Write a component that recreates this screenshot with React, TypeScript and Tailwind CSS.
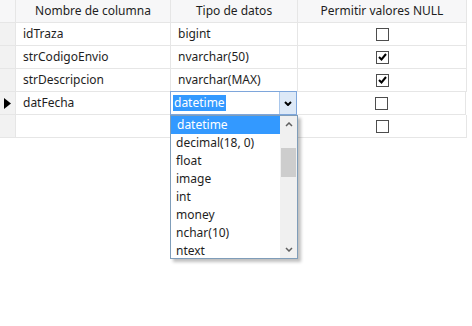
import type { ReactNode } from "react";

type Col = {
  name: string;
  type: string;
  nulls: boolean;
  current?: boolean;
};

const rows: Col[] = [
  { name: "idTraza", type: "bigint", nulls: false },
  { name: "strCodigoEnvio", type: "nvarchar(50)", nulls: true },
  { name: "strDescripcion", type: "nvarchar(MAX)", nulls: true },
  { name: "datFecha", type: "datetime", nulls: false, current: true },
];

const options = ["datetime", "decimal(18, 0)", "float", "image", "int", "money", "nchar(10)", "ntext"];

function Checkbox({ checked }: { checked: boolean }) {
  return (
    <span className="flex h-[13px] w-[13px] items-center justify-center border border-[#4d4d4d] bg-white">
      {checked ? (
        <svg width="9" height="8" viewBox="0 0 9 8">
          <path d="M1 4 L3.5 6.5 L8 1" fill="none" stroke="#000" strokeWidth="2" />
        </svg>
      ) : null}
    </span>
  );
}

function Chevron({ up = false, dark = false }: { up?: boolean; dark?: boolean }) {
  return (
    <svg width="8" height="5" viewBox="0 0 8 5" className={up ? "rotate-180" : ""}>
      <path d="M1 1 L4 4 L7 1" fill="none" stroke={dark ? "#000" : "#606060"} strokeWidth={dark ? 2 : 1.5} />
    </svg>
  );
}

function Row({ head, children }: { head?: ReactNode; children: ReactNode }) {
  return (
    <div className="flex h-[23px]">
      <div className="flex w-[16px] items-center justify-center border-r border-b border-[#e6e6e6] bg-[#f2f2f2]">
        {head}
      </div>
      {children}
    </div>
  );
}

export default function App() {
  return (
    <div
      className="relative h-[326px] w-[472px] overflow-hidden bg-white text-[12px] text-[#1e1e1e]"
      style={{ fontFamily: '"Noto Sans", "Open Sans", sans-serif' }}
    >
      <div className="w-[467px]">
        <div className="flex h-[23px] bg-[#f7f7f8]">
          <div className="w-[16px] border-r border-b border-[#e6e6e6]" />
          <div className="flex w-[155px] items-center justify-center border-r border-b border-[#e6e6e6]">
            Nombre de columna
          </div>
          <div className="flex w-[127px] items-center justify-center border-r border-b border-[#e6e6e6]">
            Tipo de datos
          </div>
          <div className="flex w-[169px] items-center justify-center border-r border-b border-[#e6e6e6]">
            Permitir valores NULL
          </div>
        </div>

        {rows.map((r) => (
          <Row
            key={r.name}
            head={
              r.current ? (
                <svg width="7" height="11" viewBox="0 0 7 11">
                  <path d="M0 0 L7 5.5 L0 11 Z" fill="#000" />
                </svg>
              ) : null
            }
          >
            <div className="flex w-[155px] items-center border-r border-b border-[#e6e6e6] pl-[7px]">
              {r.name}
            </div>
            {r.current ? (
              <div className="flex w-[127px] items-stretch border border-[#7ea6db] bg-white -ml-px -mt-px h-[24px]">
                <div className="flex flex-1 items-center pl-[2px]">
                  <span className="bg-[#3399ff] px-px leading-[16px] text-white">datetime</span>
                </div>
                <div className="flex w-[17px] items-center justify-center border-l border-[#a9c7ec] bg-[#dde9f7]">
                  <Chevron dark />
                </div>
              </div>
            ) : (
              <div className="flex w-[127px] items-center border-r border-b border-[#e6e6e6] pl-[7px]">
                {r.type}
              </div>
            )}
            <div className="flex w-[169px] items-center justify-center border-r border-b border-[#e6e6e6]">
              <Checkbox checked={r.nulls} />
            </div>
          </Row>
        ))}

        <Row>
          <div className="w-[155px] border-r border-b border-[#e6e6e6]" />
          <div className="w-[127px] border-r border-b border-[#e6e6e6]" />
          <div className="flex w-[169px] items-center justify-center border-r border-b border-[#e6e6e6]">
            <Checkbox checked={false} />
          </div>
        </Row>
      </div>

      <div className="absolute left-[170px] top-[115px] flex h-[144px] w-[128px] border border-[#7f9db9] bg-white shadow-[3px_3px_3px_rgba(0,0,0,0.25)]">
        <div className="flex flex-1 flex-col">
          {options.map((o, i) => (
            <div
              key={o}
              className={
                i === 0
                  ? "flex h-[18px] items-center bg-[#3399ff] pl-[6px] text-white"
                  : "flex h-[18px] items-center pl-[5px]"
              }
            >
              {o}
            </div>
          ))}
        </div>
        <div className="flex w-[17px] flex-col bg-[#f0f0f0]">
          <div className="flex h-[17px] items-center justify-center">
            <Chevron up />
          </div>
          <div className="mt-[15px] h-[29px] mx-px bg-[#cdcdcd]" />
          <div className="flex-1" />
          <div className="flex h-[17px] items-center justify-center">
            <Chevron />
          </div>
        </div>
      </div>
    </div>
  );
}
